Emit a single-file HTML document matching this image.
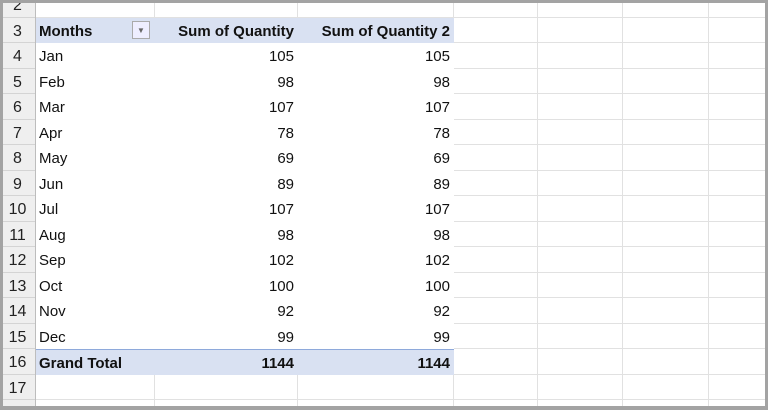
<html style="overflow:hidden;width:768px;height:410px"><head><style>
html,body{margin:0;width:768px;height:410px;overflow:hidden}
body{background:#fff;font-family:"Liberation Sans",sans-serif;position:relative}
.r{position:absolute;left:0;width:768px;height:25.5px;font-size:15px}
.h{position:absolute;left:0;width:35px;height:100%;background:#efefef;border-bottom:1px solid #d4d4d4;box-sizing:border-box;text-align:center;line-height:27px;color:#222;font-size:16px}
.c{position:absolute;top:0;height:100%;border-right:1px solid #e1e1e1;border-bottom:1px solid #e1e1e1;box-sizing:border-box;line-height:27px;padding:0 4px;color:#111}
.a{left:35px;width:120px}.b{left:155px;width:143px;text-align:right}.cc{left:298px;width:156px;text-align:right}
.d{left:454px;width:84px}.e{left:538px;width:85px}.f{left:623px;width:86px}.g{left:709px;width:59px}
.p .a,.p .b,.p .cc{border-right:none;border-bottom:none}
.hd .a,.hd .b,.hd .cc,.tot .a,.tot .b,.tot .cc{background:#d9e1f2;font-weight:bold}
.tot .a,.tot .b,.tot .cc{border-top:1px solid #8ea9db}
#vl{position:absolute;left:35px;top:0;width:1px;height:410px;background:#bdbdbd}
.frame{position:absolute;left:0;top:0;width:768px;height:410px;box-sizing:border-box;border:3px solid #a3a3a3;border-bottom-width:4px;pointer-events:none}
</style></head><body>
<div id="rows"></div>
<script>
const data=[["2","","",""],["3","Months","Sum of Quantity","Sum of Quantity 2"],["4","Jan","105","105"],["5","Feb","98","98"],["6","Mar","107","107"],["7","Apr","78","78"],["8","May","69","69"],["9","Jun","89","89"],["10","Jul","107","107"],["11","Aug","98","98"],["12","Sep","102","102"],["13","Oct","100","100"],["14","Nov","92","92"],["15","Dec","99","99"],["16","Grand Total","1144","1144"],["17","","",""]];
let h="";data.forEach((d,i)=>{let top=-8+i*25.5;let cls=i==1?"hd p":i==14?"tot p":(i>=2&&i<14?"p":"");
h+=`<div class="r ${cls}" style="top:${top}px"><div class="h">${d[0]}</div><div class="c a">${d[1]}${i==1?'<span style="position:absolute;left:97px;top:3px;width:18px;height:18px;border:1px solid #aaa;background:#eef;box-sizing:border-box;font-size:8px;line-height:17px;text-align:center;color:#666;font-weight:normal">&#9660;</span>':''}</div><div class="c b">${d[2]}</div><div class="c cc">${d[3]}</div><div class="c d"></div><div class="c e"></div><div class="c f"></div><div class="c g"></div></div>`});
h+=`<div class="r" style="top:400px"><div class="h"></div><div class="c a"></div><div class="c b"></div><div class="c cc"></div><div class="c d"></div><div class="c e"></div><div class="c f"></div><div class="c g"></div></div>`;
document.getElementById("rows").innerHTML=h;
</script>
<div id="vl"></div>
<div class="frame"></div>
</body></html>
